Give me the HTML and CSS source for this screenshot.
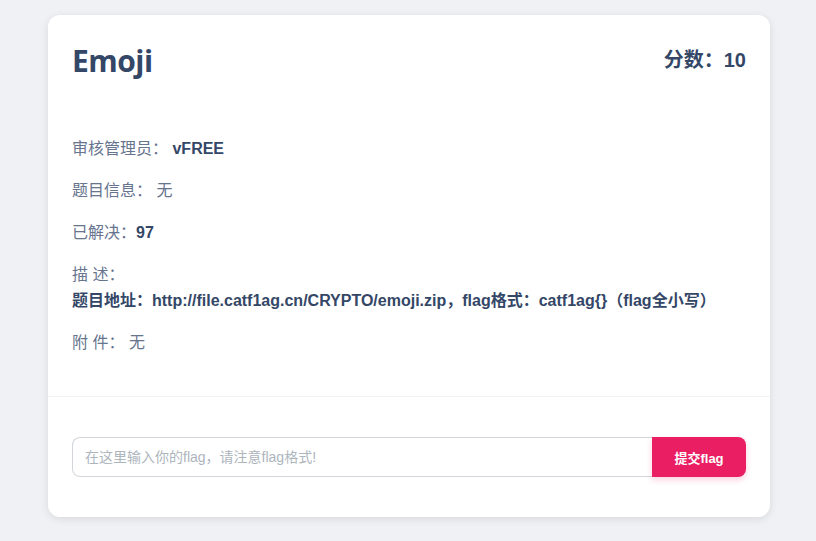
FILE: index.html
```html
<!DOCTYPE html>
<html lang="zh-CN">
<head>
<meta charset="utf-8">
<title>Emoji</title>
<link rel="stylesheet" href="styles.css">
</head>
<body>
<div class="card">
  <div class="card-head">
    <h1 class="title">Emoji</h1>
    <div class="score">分数：10</div>
  </div>
  <div class="card-body">
    <p class="row">审核管理员： <b class="val">vFREE</b></p>
    <p class="row">题目信息： 无</p>
    <p class="row">已解决：<b class="val">97</b></p>
    <p class="row desc">描 述：<br><b class="val">题目地址：http://file.catf1ag.cn/CRYPTO/emoji.zip，flag格式：catf1ag{}（flag全小写）</b></p>
    <p class="row">附 件： 无</p>
  </div>
  <div class="card-foot">
    <div class="submit">
      <input class="flag-input" type="text" placeholder="在这里输入你的flag，请注意flag格式!">
      <button class="btn">提交flag</button>
    </div>
  </div>
</div>
</body>
</html>
```

FILE: styles.css
```css
* { box-sizing: border-box; }
html, body { margin: 0; padding: 0; }
body {
  background: #f0f1f5;
  font-family: "Liberation Sans", "Noto Sans CJK SC", sans-serif;
  color: #344767;
  height: 541px;
  overflow: hidden;
}
.card {
  margin: 15px 46px 0 48px;
  background: #fff;
  border-radius: 12px;
  box-shadow: 0 2px 8px rgba(0, 0, 0, 0.1);
}
.card-head {
  display: flex;
  justify-content: space-between;
  align-items: center;
  padding: 24px 24px 0 24px;
}
.title {
  margin: 0;
  font-family: "Open Sans", "Noto Sans CJK SC", sans-serif;
  font-weight: 700;
  font-size: 30px;
  line-height: 44px;
  color: #344767;
  letter-spacing: -0.5px;
}
.score {
  font-weight: 700;
  font-size: 20px;
  color: #344767;
  margin-top: -5px;
}
.card-body {
  padding: 53px 24px 40px 24px;
  border-bottom: 1px solid #f2f3f5;
}
.row {
  margin: 0 0 16px 0;
  font-size: 16px;
  line-height: 26px;
  color: #67748e;
}
.row:last-child { margin-bottom: 0; }
.val {
  color: #344767;
  font-weight: 700;
}
.card-foot {
  padding: 40px 24px 40px 24px;
}
.submit {
  display: flex;
  height: 40px;
}
.flag-input {
  flex: 1;
  height: 40px;
  border: 1px solid #d2d6da;
  border-right: none;
  border-radius: 8px 0 0 8px;
  padding: 0 12px;
  font-family: "Liberation Sans", "Noto Sans CJK SC", sans-serif;
  font-size: 14px;
  color: #495057;
  outline: none;
}
.flag-input::placeholder { color: #adb5bd; }
.btn {
  width: 94px;
  height: 40px;
  border: none;
  border-radius: 0 8px 8px 0;
  background: #e91e63;
  color: #fff;
  font-family: "Liberation Sans", "Noto Sans CJK SC", sans-serif;
  font-weight: 700;
  font-size: 13px;
  box-shadow: 0 3px 6px rgba(233, 30, 99, 0.2);
}
```
